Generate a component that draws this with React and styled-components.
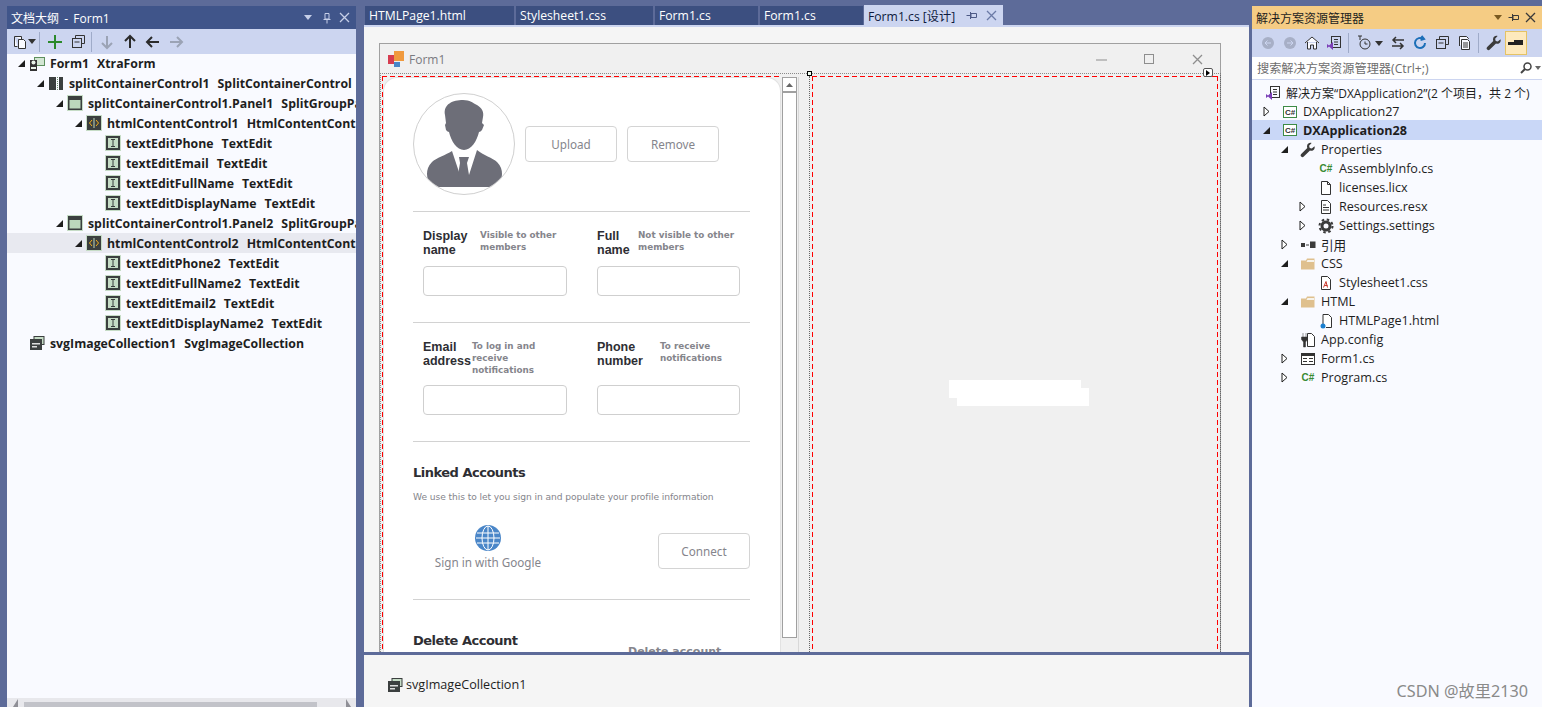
import React from "react";
import styled, { createGlobalStyle } from "styled-components";

const Global = createGlobalStyle`
  html, body { margin: 0; padding: 0; height: 100%; overflow: hidden; background: #5d6b99; }
  #root { height: 707px; width: 1542px; }
  * { box-sizing: border-box; }
`;
const UI = `"Open Sans", "Noto Sans CJK SC", sans-serif`;
const dashH = `repeating-linear-gradient(90deg, #f00 0 5px, transparent 5px 8px)`;
const dashV = `repeating-linear-gradient(180deg, #f00 0 5px, transparent 5px 8px)`;

const Page = styled.div`
  display: grid; grid-template-columns: 349px 8px 885px 3px 290px;
  height: 707px; width: 1542px; padding: 6px 0 0 7px; background: #5d6b99; position: relative;
  font-family: ${UI}; font-size: 13px; color: #1e1e1e; overflow: hidden;
`;
const Side = styled.section`display: flex; flex-direction: column; min-width: 0; height: 701px; background: #f9faff; overflow: hidden;`;
const Title = styled.header`
  height: 23px; flex: none; display: flex; align-items: center; padding: 0 6px 0 4px;
  background: ${p => (p.$active ? "#f5cc84" : "#40558a")}; color: ${p => (p.$active ? "#1e1e1e" : "#fff")}; font-size: 12px;
`;
const TitleText = styled.span`flex: 1; white-space: pre; word-spacing: -.5px;`;
const Spacer = styled.span`width: ${p => p.$w}px; flex: none;`;
const Toolbar = styled.div`height: ${p => p.$h || 25}px; flex: none; background: #ccd5f0; display: flex; align-items: center; padding-left: 5px;`;
const TbSep = styled.i`width: 1px; height: 20px; background: #9fabc9; margin: 0 ${p => p.$r ?? p.$m ?? 5}px 0 ${p => p.$m ?? 5}px;`;
const TinyBtn = styled.span`display: flex; align-items: center; justify-content: center; width: ${p => p.$w || 23}px; height: 22px; flex: none;`;
const ActiveTool = styled.span`width: 22px; height: 24px; background: #fde9bd; border: 1px solid #e5c365; display: flex; align-items: center; justify-content: center;`;
const Tree = styled.div`flex: 1; min-height: 0; padding-top: ${p => p.$top || 0}px; margin-top: ${p => p.$shift || 0}px; overflow: hidden;`;
const Row = styled.div`
  height: ${p => (p.$sel === 2 ? 20 : p.$h)}px; margin-top: ${p => (p.$sel === 2 ? -1 : 0)}px;
  display: flex; align-items: center; white-space: nowrap; overflow: hidden;
  padding-left: ${p => p.$i}px; font-weight: ${p => (p.$bold ? 700 : 400)}; font-size: ${p => p.$fs || 12.6}px;
  background: ${p => (p.$sel === 2 ? "#c9d7f7" : p.$sel === 1 ? "#e8e9f0" : "transparent")};
`;
const Arrow = styled.span`width: ${p => p.$w || 12}px; flex: none; margin-left: -2px; display: flex; align-items: center;`;
const IconSlot = styled.span`width: 16px; height: 16px; flex: none; margin-right: ${p => p.$mr || 5}px; display: flex; align-items: center; justify-content: center;`;
const Kind = styled.span`margin-left: 8px;`;
const OutlineText = styled.span`font-size: 12.3px;`;
const HScroll = styled.div`height: 9px; flex: none; background: #e8e8ec; display: flex; align-items: flex-end; padding: 0 5px 0 6px; justify-content: space-between; margin-top: auto;`;
const HThumb = styled.div`width: 293px; height: 5px; background: #c2c3c9; margin: 0 auto 0 6px;`;

const Center = styled.main`grid-column: 3; display: flex; flex-direction: column; height: 701px; min-width: 0;`;
const Tabs = styled.nav`height: 19px; flex: none; display: flex; padding-left: 1px; align-items: flex-start;`;
const Tab = styled.div`
  width: ${p => p.$w}px; height: ${p => (p.$on ? 21 : 19)}px; display: flex; align-items: center; padding-left: 4px; flex: none;
  margin-right: ${p => p.$gap ?? 2}px; margin-top: ${p => (p.$on ? -1 : 0)}px;
  background: ${p => (p.$on ? "#ccd5f0" : "#3c4f80")}; color: ${p => (p.$on ? "#0e1a3d" : "#fff")}; font-size: 12.2px; white-space: pre;
`;
const TabAccent = styled.div`height: 2px; flex: none; background: #ccd5f0;`;
const Doc = styled.div`flex: 1; min-height: 0; background: #f5f5f5; overflow: hidden; padding: 16px 0 0 15px;`;
const FormWin = styled.div`width: 842px; height: 640px; border: 1px solid #a0a0a0; background: #f0f0f0; display: flex; flex-direction: column;`;
const WinBar = styled.div`height: 29px; flex: none; display: flex; align-items: center; padding: 1px 0 0 8px; margin-right: -1px; color: #7a7a80; font-size: 12px;`;
const WinTitle = styled.span`flex: 1; margin-left: 5px;`;
const WinBtn = styled.span`width: 48px; height: 28px; flex: none; display: flex; align-items: center; justify-content: center;`;
const Split = styled.div`
  flex: 1; position: relative; display: grid; grid-template-columns: 429px 1fr; min-height: 0; margin-right: -1px;
  border-top: 1px dotted #8a8a8a; border-left: 1px dotted #8a8a8a; border-right: 1px dotted #666;
`;
const PanelL = styled.div`
  margin: 2px 0 0 1px; padding: 1px 0 0 1px; display: flex; height: 640px; position: relative;
  border-right: 1px dotted #666;
  background: ${dashH} 0 0 / 398px 1px no-repeat, ${dashV} 0 0 / 1px 100% no-repeat;
`;
const PanelR = styled.div`
  margin: 2px 2px 0 2px; position: relative; height: 640px;
  background: ${dashH} 0 0 / 100% 1px no-repeat, ${dashV} 0 0 / 1px 100% no-repeat, ${dashV} 100% 0 / 1px 100% no-repeat;
`;
const Card = styled.div`width: 398px; height: 800px; background: #fff; border-radius: 14px 14px 0 0; border: 1px solid #e2e2e2; border-bottom: none; padding: 15px 30px 0 29px; flex: none;`;
const VScroll = styled.div`width: 15px; flex: none; height: 561px; margin: 0 0 0 1px; border: 1px solid #a0a0a0; background: #fff;`;
const ScrollUp = styled.div`height: 15px; border-bottom: 2px solid #a0a0a0; display: flex; align-items: center; justify-content: center; background: #fff;`;
const Gutter = styled.div`flex: 1; margin-left: 1px; border-left: 1px solid #d8d8d8;`;
const Top = styled.div`display: flex; align-items: center; gap: 10px; height: 102px;`;
const Avatar = styled.div`width: 102px; height: 102px; border-radius: 50%; border: 1px solid #d0d0d0; overflow: hidden; flex: none;`;
const Btn = styled.div`width: 92px; height: 36px; border: 1px solid #d4d4d4; border-radius: 4px; display: flex; align-items: center; justify-content: center; color: #85858c; font-family: "Noto Sans", sans-serif; font-size: 11.7px; margin-top: ${p => p.$mt || 0}px;`;
const Rule = styled.hr`border: 0; height: 1px; background: #d2d2d2; margin: ${p => p.$t}px 0 0; width: 337px;`;
const Fields = styled.div`display: grid; grid-template-columns: 144px 143px; column-gap: 30px; margin-left: 10px; margin-top: ${p => p.$t}px;`;
const Field = styled.div`display: flex; flex-direction: column;`;
const FieldHead = styled.div`display: flex; height: ${p => p.$h}px; gap: ${p => p.$g}px;`;
const FieldName = styled.div`font-family: "Liberation Sans", sans-serif; font-weight: 700; font-size: 12.5px; line-height: 14px; width: ${p => p.$w}px; flex: none; color: #2e2e33;`;
const FieldHint = styled.div`font-family: "DejaVu Sans", sans-serif; font-weight: 700; font-size: 8.8px; line-height: 12px; color: #85858c;`;
const Input = styled.div`height: 30px; border: 1px solid #cfcfcf; border-radius: 4px; background: #fff;`;
const H2 = styled.h2`margin: ${p => p.$t}px 0 0; font-family: "DejaVu Sans", sans-serif; font-size: 13px; line-height: 18px; font-weight: 700; color: #2e2e33; letter-spacing: -.5px;`;
const Sub = styled.p`margin: 9px 0 0; font-family: "DejaVu Sans", sans-serif; font-size: 9.15px; line-height: 13px; color: #85858c; letter-spacing: -.08px;`;
const Linked = styled.div`display: flex; align-items: flex-start; justify-content: space-between; margin-top: 21px; height: 48px; width: 337px;`;
const Google = styled.div`width: 150px; display: flex; flex-direction: column; align-items: center; color: #85858c; font-family: "Noto Sans", sans-serif; font-size: 11.7px; gap: 3px; line-height: 16px;`;
const DelRow = styled.div`display: flex; margin-top: 32px; width: 337px; height: 40px; position: relative;`;
const DelBtn = styled.div`position: absolute; left: 215px; top: 13px; font-family: "DejaVu Sans", sans-serif; font-weight: 700; font-size: 11px; color: #85858c;`;
const Blank = styled.div`position: absolute; background: #fff; left: ${p => p.$x}px; top: ${p => p.$y}px; width: 132px; height: 18px;`;
const Handle = styled.span`position: absolute; width: 5px; height: 5px; border: 1px solid #000; background: #f2fff2; left: 426px; top: -3px;`;
const Smart = styled.span`position: absolute; right: 7px; top: -6px; width: 10px; height: 9px; border: 1px solid #555; border-radius: 2px; background: #fff; display: flex; align-items: center; justify-content: center;`;
const Divider = styled.div`height: 3px; flex: none; background: #5d6b99;`;
const TrayBox = styled.div`height: 52px; flex: none; background: #f5f5f5; display: flex; align-items: center; padding: 7px 0 0 23px; gap: 3px; font-size: 12.6px;`;

const Right = styled(Side)`grid-column: 5; width: 290px;`;
const SearchBar = styled.div`height: 23px; flex: none; background: #fff; border-bottom: 1px solid #ccd5f0; color: #6d6d6d; display: flex; align-items: center; padding: 0 1px 0 5px; font-size: 12.2px;`;
const SearchText = styled.span`flex: 1;`;
const Watermark = styled.div`position: absolute; right: 14px; top: 678px; color: #8a8a8a; font-family: "Noto Sans", "Noto Sans CJK SC", sans-serif; font-size: 16.2px;`;
const CSFileMark = styled.span`color: #388a34; font-weight: 800; font-size: 10px; font-family: "Liberation Sans", sans-serif;`;

const Tri = ({ open }) => open
  ? <svg width="9" height="9"><path d="M8 1v7H1z" fill="#1e1e1e" /></svg>
  : <svg width="9" height="11"><path d="M2 1l5 4.5L2 10z" fill="#fff" stroke="#1e1e1e" /></svg>;

const Svg = ({ children, s = 16, v = 16 }) => <svg width={s} height={s} viewBox={`0 0 ${v} ${v}`}>{children}</svg>;
const GBox = ({ children }) => <Svg><rect width="16" height="16" fill="#c6dcc6" /><rect x="1" y="1" width="14" height="14" fill="#3b3f3f" />{children}</Svg>;

const IconEdit = () => <GBox><rect x="3" y="3" width="10" height="10" fill="#c6dcc6" /><path d="M6 4.500h4M6 11.500h4M8 4.500v7" stroke="#3b3f3f" fill="none" /></GBox>;
const IconPanel = () => <GBox><rect x="2.500" y="5" width="11" height="8.500" fill="#bcd8bc" /></GBox>;
const IconHtml = () => <GBox><path d="M6 5L3.500 8 6 11" stroke="#f0b020" fill="none" /><path d="M10 5l2.500 3L10 11" stroke="#f0b020" fill="none" /><path d="M8 3v10" stroke="#bcd8bc" /></GBox>;
const IconSplit = () => <Svg><rect x="1" y="2" width="7" height="13" fill="#3b3f3f" /><rect x="11" y="2" width="4" height="13" fill="#3b3f3f" /><path d="M9.500 2v13" stroke="#6c8f6c" strokeDasharray="1 1" /></Svg>;
const IconForm = () => <Svg><rect x="5.500" y="2.500" width="10" height="8" fill="#d3e6d3" stroke="#5d8f5d" /><rect x="1" y="5" width="7" height="11" fill="#333" /><circle cx="4.500" cy="7.500" r="2" fill="#e9f3e9" /><path d="M2 12h5v2H2z" fill="#e9f3e9" /></Svg>;
const IconColl = () => <Svg><rect x="5" y="1.500" width="10" height="8" fill="#c6dcc6" stroke="#3b3f3f" /><rect x="1" y="4" width="12" height="11" fill="#3b3f3f" /><rect x="3" y="8" width="8" height="1.500" fill="#ddd" /><rect x="3" y="11" width="5" height="1.500" fill="#ddd" /></Svg>;
const CollOutline = () => <Svg><path d="M5.500 4V1.500h9v8H12" stroke="#333" fill="none" /><rect x="2.500" y="4.500" width="9" height="9" fill="none" stroke="#333" /><path d="M4.500 8h5" stroke="#333" /></Svg>;

const Pin = ({ c = "#c6cfe8" }) => <Svg s={12} v={12}><path d="M4 1.500h4v5.500H4zM2.500 7.500h7M6 8v3.500" stroke={c} fill="none" /></Svg>;
const PinH = ({ c = "#4d5a86" }) => <Svg s={12} v={12}><path d="M5 3.500h5.500v4H5zM4.500 2v7M4 5.500H.5" stroke={c} fill="none" /></Svg>;
const Cross = ({ c = "#c6cfe8", s = 11 }) => <svg width={s} height={s} viewBox="0 0 11 11"><path d="M1 1l9 9M10 1l-9 9" stroke={c} strokeWidth="1.300" /></svg>;
const Drop = ({ c = "#c6cfe8" }) => <svg width="8" height="5"><path d="M0 0h8L4 5z" fill={c} /></svg>;
const CS = () => <Svg><rect x="1.500" y="2.500" width="13" height="11" fill="#fff" stroke="#3e8b46" /><text x="8" y="11" fontSize="8" fontWeight="700" textAnchor="middle" fill="#2f2f2f" fontFamily="Liberation Sans">C#</text></Svg>;
const CSFile = () => <CSFileMark>C#</CSFileMark>;
const VS = () => <Svg><rect x="5.500" y="1.500" width="9" height="11" fill="none" stroke="#333" /><path d="M8 4.500h4M8 7h4M8 9.500h4" stroke="#333" /><path d="M1 9l2 1.500L7 7v8l-4-3.500L1 13z" fill="#7b3fb8" /></Svg>;
const Wrench = ({ c = "#3b3b3b" }) => <Svg><path d="M14.500 4.200l-2.700 2.300-2.100-.6-.6-2.100L11.600 1C9.300.3 7 1.900 7 4.400c0 .5.100 1 .3 1.500L1.200 12c-.8.800-.8 1.800 0 2.600.8.800 1.800.8 2.600 0l6.200-6.100c2.900 1 5.400-1.400 4.500-4.300z" fill={c} /></Svg>;
const FileI = () => <Svg><path d="M3.500 1.500h6l3 3v10h-9z" fill="#fff" stroke="#333" /><path d="M9.500 1.500v3h3" fill="none" stroke="#333" /></Svg>;
const Resx = () => <Svg><path d="M3.500 1.500h6l3 3v10h-9z" fill="#fff" stroke="#333" /><path d="M5 6h3M5 8.500h6M5 11h6" stroke="#333" /></Svg>;
const Gear = () => <Svg><circle cx="8" cy="8" r="4" fill="none" stroke="#3b3b3b" strokeWidth="3" /><circle cx="8" cy="8" r="6.500" fill="none" stroke="#3b3b3b" strokeWidth="2" strokeDasharray="2.500 2.600" /></Svg>;
const Refs = () => <Svg><rect x="1" y="6" width="4" height="4" fill="#3b3b3b" /><rect x="10" y="4.500" width="5.500" height="6.500" fill="#3b3b3b" /><path d="M6 8h3" stroke="#3b3b3b" /></Svg>;
const Folder = () => <Svg><path d="M1 4.500h5l1-2h7.500v11H1z" fill="#dfc08e" /><path d="M3 6h11V4H7.500L6.500 6z" fill="#f7f3ea" /></Svg>;
const CssI = () => <Svg><path d="M3.500 1.500h6l3 3v10h-9z" fill="#fff" stroke="#333" /><path d="M5.500 12.500l2.500-6 1.500 6M6.500 10.500h3" stroke="#c8372b" fill="none" /></Svg>;
const HtmlI = () => <Svg><path d="M5 12V1.500h5.500l3 3v10H8" fill="#fff" stroke="#333" /><circle cx="5" cy="13" r="2.500" fill="#1a7fd0" /></Svg>;
const Config = () => <Svg><path d="M7.500 1.500h4l3 3v10h-7z" fill="#fff" stroke="#333" /><path d="M3 1v4M6 1v4M1.500 5h6v2.500L5.500 10v5h-2v-5L1.500 7.500z" fill="#333" stroke="#333" strokeWidth=".5" /></Svg>;
const FormI = () => <Svg><rect x="1.500" y="2.500" width="13" height="11" fill="#fff" stroke="#333" /><rect x="1.500" y="2.500" width="13" height="2.500" fill="#333" /><path d="M3 7.500h4M3 10.500h4M9 7.500h4M9 10.500h4" stroke="#333" /></Svg>;

const G = ({ children, s = 16 }) => <svg width={s} height={s} viewBox="0 0 16 16">{children}</svg>;
const ArrowBtn = ({ d, c }) => <TinyBtn><G><path d={d} stroke={c} strokeWidth="2" fill="none" /></G></TinyBtn>;
const Globe = () => <svg width="26" height="26" viewBox="0 0 26 26"><circle cx="13" cy="13" r="13" fill="#4a86c8" /><g stroke="#fff" strokeWidth="1" fill="none"><ellipse cx="13" cy="13" rx="6" ry="12" /><path d="M13 1v24M2 8h22M1 13h24M2 18h22" /></g></svg>;
const Person = () => (
  <svg width="100" height="100" viewBox="1 1 100 100">
    <path d="M32 22C30 11 40 7 50 7c7 0 10 3 14 5 5 3 7 7 6 12l-1 6 2 2-2 5c-1 1-2 2-3 2-2 9-8 18-15 18S38 48 36 39c-1 0-2-1-3-2l-1-5 1-2z" fill="#6d6e78" />
    <path d="M39 58c-6 4-16 7-20 11-4 4-5 8-5 12 0 5 2 10 4 13h67c2-3 4-8 4-13 0-4-1-8-5-12-4-4-14-7-20-12l-8 25h-9z" fill="#6d6e78" />
    <path d="M46 64h10l-2 6 2 12-1 3h-9l-1-3 2-12z" fill="#6d6e78" />
  </svg>
);
const Logo = () => <svg width="16" height="16" viewBox="0 0 16 16"><rect y="4" width="6" height="9" fill="#d63c50" /><rect x="6" width="10" height="10" fill="#f09a3e" /><rect x="6" y="11" width="6" height="5" fill="#4a86c8" /></svg>;

const outline = [
  { i: 12, label: "Form1", kind: "XtraForm", icon: <IconForm /> },
  { i: 31, label: "splitContainerControl1", kind: "SplitContainerControl", icon: <IconSplit /> },
  { i: 50, label: "splitContainerControl1.Panel1", kind: "SplitGroupPanel", icon: <IconPanel /> },
  { i: 69, label: "htmlContentControl1", kind: "HtmlContentControl", icon: <IconHtml /> },
  { i: 88, label: "textEditPhone", kind: "TextEdit", icon: <IconEdit />, leaf: 1 },
  { i: 88, label: "textEditEmail", kind: "TextEdit", icon: <IconEdit />, leaf: 1 },
  { i: 88, label: "textEditFullName", kind: "TextEdit", icon: <IconEdit />, leaf: 1 },
  { i: 88, label: "textEditDisplayName", kind: "TextEdit", icon: <IconEdit />, leaf: 1 },
  { i: 50, label: "splitContainerControl1.Panel2", kind: "SplitGroupPanel", icon: <IconPanel /> },
  { i: 69, label: "htmlContentControl2", kind: "HtmlContentControl", icon: <IconHtml />, sel: 1 },
  { i: 88, label: "textEditPhone2", kind: "TextEdit", icon: <IconEdit />, leaf: 1 },
  { i: 88, label: "textEditFullName2", kind: "TextEdit", icon: <IconEdit />, leaf: 1 },
  { i: 88, label: "textEditEmail2", kind: "TextEdit", icon: <IconEdit />, leaf: 1 },
  { i: 88, label: "textEditDisplayName2", kind: "TextEdit", icon: <IconEdit />, leaf: 1 },
  { i: 12, label: "svgImageCollection1", kind: "SvgImageCollection", icon: <IconColl />, leaf: 1 },
];

const solution = [
  { i: 13, label: "解决方案“DXApplication2”(2 个项目，共 2 个)", icon: <VS />, root: 1, fs: 12 },
  { i: 12, label: "DXApplication27", icon: <CS />, a: "c" },
  { i: 12, label: "DXApplication28", icon: <CS />, a: "o", bold: 1, sel: 2 },
  { i: 30, label: "Properties", icon: <Wrench />, a: "o" },
  { i: 48, label: "AssemblyInfo.cs", icon: <CSFile /> },
  { i: 48, label: "licenses.licx", icon: <FileI /> },
  { i: 48, label: "Resources.resx", icon: <Resx />, a: "c" },
  { i: 48, label: "Settings.settings", icon: <Gear />, a: "c" },
  { i: 30, label: "引用", icon: <Refs />, a: "c" },
  { i: 30, label: "CSS", icon: <Folder />, a: "o" },
  { i: 48, label: "Stylesheet1.css", icon: <CssI /> },
  { i: 30, label: "HTML", icon: <Folder />, a: "o" },
  { i: 48, label: "HTMLPage1.html", icon: <HtmlI /> },
  { i: 30, label: "App.config", icon: <Config /> },
  { i: 30, label: "Form1.cs", icon: <FormI />, a: "c" },
  { i: 30, label: "Program.cs", icon: <CSFile />, a: "c" },
];

export default function App() {
  return (
    <Page>
      <Global />
      <Side>
        <Title><TitleText>文档大纲  -  Form1</TitleText><Drop /><Spacer $w={9} /><Pin /><Spacer $w={6} /><Cross /></Title>
        <Toolbar>
          <TinyBtn $w={24}><G><path d="M2.500 2.500h7v3M2.500 2.500v10h3M6.500 5.500h5l2 2v7h-7z" stroke="#333" fill="#f9faff" /></G><Drop c="#333" /></TinyBtn>
          <TbSep $m={3} />
          <TinyBtn><G><path d="M8 1v14M1 8h14" stroke="#2b8a2b" strokeWidth="2" /></G></TinyBtn>
          <TinyBtn><CollOutline /></TinyBtn>
          <TbSep $m={2} $r={3} />
          <ArrowBtn d="M8 2v12M3 9l5 5 5-5" c="#9ba3b5" />
          <ArrowBtn d="M8 14V2M3 7l5-5 5 5" c="#2b2b2b" />
          <ArrowBtn d="M14 8H2M7 3L2 8l5 5" c="#2b2b2b" />
          <ArrowBtn d="M2 8h12M9 3l5 5-5 5" c="#9ba3b5" />
        </Toolbar>
        <Tree $shift={-1}>
          {outline.map((r, k) => (
            <Row key={k} $h={20} $i={r.i} $sel={r.sel} $bold>
              <Arrow>{r.leaf ? null : <Tri open />}</Arrow>
              <IconSlot>{r.icon}</IconSlot>
              <OutlineText>{r.label}<Kind>{r.kind}</Kind></OutlineText>
            </Row>
          ))}
        </Tree>
        <HScroll>
          <svg width="5" height="8"><path d="M5 0v8H0z" fill="#8f8f96" /></svg>
          <HThumb />
          <svg width="5" height="8"><path d="M0 0v8h5z" fill="#8f8f96" /></svg>
        </HScroll>
      </Side>

      <Center>
        <Tabs>
          <Tab $w={149}>HTMLPage1.html</Tab>
          <Tab $w={137}>Stylesheet1.css</Tab>
          <Tab $w={103}>Form1.cs</Tab>
          <Tab $w={103} $gap={1}>Form1.cs</Tab>
          <Tab $w={139} $on>Form1.cs [设计]<Spacer $w={11} /><PinH /><Spacer $w={8} /><Cross c="#6b7aa6" /></Tab>
        </Tabs>
        <TabAccent />
        <Doc>
          <FormWin>
            <WinBar>
              <Logo />
              <WinTitle>Form1</WinTitle>
              <WinBtn><svg width="11" height="11"><path d="M0 6h11" stroke="#8e8e8e" /></svg></WinBtn>
              <WinBtn><svg width="11" height="11"><rect x=".5" y=".5" width="9" height="9" stroke="#8e8e8e" fill="none" /></svg></WinBtn>
              <WinBtn><Cross c="#8e8e8e" /></WinBtn>
            </WinBar>
            <Split>
              <PanelL>
                <Card>
                  <Top>
                    <Avatar><Person /></Avatar>
                    <Btn>Upload</Btn>
                    <Btn>Remove</Btn>
                  </Top>
                  <Rule $t={16} />
                  <Fields $t={17}>
                    <Field><FieldHead $h={37} $g={14}><FieldName $w={43}>Display name</FieldName><FieldHint>Visible to other members</FieldHint></FieldHead><Input /></Field>
                    <Field><FieldHead $h={37} $g={8}><FieldName $w={33}>Full name</FieldName><FieldHint>Not visible to other members</FieldHint></FieldHead><Input /></Field>
                  </Fields>
                  <Rule $t={26} />
                  <Fields $t={17}>
                    <Field><FieldHead $h={45} $g={2}><FieldName $w={47}>Email address</FieldName><FieldHint>To log in and receive notifications</FieldHint></FieldHead><Input /></Field>
                    <Field><FieldHead $h={45} $g={9}><FieldName $w={54}>Phone number</FieldName><FieldHint>To receive notifications</FieldHint></FieldHead><Input /></Field>
                  </Fields>
                  <Rule $t={26} />
                  <H2 $t={22}>Linked Accounts</H2>
                  <Sub>We use this to let you sign in and populate your profile information</Sub>
                  <Linked>
                    <Google><Globe />Sign in with Google</Google>
                    <Btn $mt={8}>Connect</Btn>
                  </Linked>
                  <Rule $t={26} />
                  <DelRow><H2 $t={0}>Delete Account</H2><DelBtn>Delete account</DelBtn></DelRow>
                </Card>
                <VScroll><ScrollUp><svg width="7" height="4"><path d="M0 4h7L3.500 0z" fill="#666" /></svg></ScrollUp></VScroll>
                <Gutter />
              </PanelL>
              <PanelR>
                <Blank $x={137} $y={304} />
                <Blank $x={145} $y={312} />
              </PanelR>
              <Handle />
              <Smart><svg width="4" height="6"><path d="M0 0l4 3-4 3z" fill="#000" /></svg></Smart>
            </Split>
          </FormWin>
        </Doc>
        <Divider />
        <TrayBox><IconColl />svgImageCollection1</TrayBox>
      </Center>

      <Right>
        <Title $active><TitleText>解决方案资源管理器</TitleText><Drop c="#7a5a20" /><Spacer $w={6} /><PinH c="#3a3a3a" /><Spacer $w={5} /><Cross c="#3a3a3a" /></Title>
        <Toolbar $h={28}>
          <TinyBtn $w={22}><G><circle cx="8" cy="8" r="6" fill="#a7afc6" /><path d="M11 8H5M7.500 5.500L5 8l2.500 2.500" stroke="#ccd5f0" fill="none" /></G></TinyBtn>
          <TinyBtn $w={22}><G><circle cx="8" cy="8" r="6" fill="#a7afc6" /><path d="M5 8h6M8.500 5.500L11 8l-2.500 2.500" stroke="#ccd5f0" fill="none" /></G></TinyBtn>
          <TinyBtn $w={22}><G><path d="M1 8l7-6 7 6M3.500 7v7h3v-4h3v4h3V7" stroke="#333" fill="#f9faff" /></G></TinyBtn>
          <TinyBtn $w={22}><VS /></TinyBtn>
          <TbSep $m={3} />
          <TinyBtn $w={35}><G><circle cx="9" cy="9" r="5" fill="none" stroke="#333" /><path d="M9 6.500V9h2.500M2 1h4M4 1v4" stroke="#333" fill="none" /></G><Spacer $w={3} /><Drop c="#333" /></TinyBtn>
          <TinyBtn $w={22}><G><path d="M14 5H3M6 2L3 5l3 3M2 11h11M10 8l3 3-3 3" stroke="#333" strokeWidth="1.500" fill="none" /></G></TinyBtn>
          <TinyBtn $w={22}><G><path d="M13 8a5 5 0 1 1-2-4M9.500 1l2.500 3-3.500 1" stroke="#1c6fb8" strokeWidth="2" fill="none" /></G></TinyBtn>
          <TinyBtn $w={22}><CollOutline /></TinyBtn>
          <TinyBtn $w={22}><G><path d="M3.500 11V1.500h7l2 2V4M5.500 4.500h6l2 2v8h-8z" stroke="#333" fill="#f9faff" /><path d="M7 8h5M7 10h5M7 12h5" stroke="#333" /></G></TinyBtn>
          <TbSep $m={3} $r={4} />
          <TinyBtn $w={22}><Wrench /></TinyBtn>
          <ActiveTool><svg width="16" height="8"><rect y="3" width="15" height="3" fill="#222" /><rect x="6" y="1" width="9" height="3" fill="#222" /></svg></ActiveTool>
        </Toolbar>
        <SearchBar>
          <SearchText>搜索解决方案资源管理器(Ctrl+;)</SearchText>
          <svg width="14" height="14"><circle cx="8.500" cy="5.500" r="3.500" stroke="#444" strokeWidth="1.500" fill="none" /><path d="M6 8L2 12" stroke="#444" strokeWidth="2" /></svg>
          <Spacer $w={2} />
          <svg width="6" height="4"><path d="M0 0h6L3 4z" fill="#666" /></svg>
        </SearchBar>
        <Tree $top={3}>
          {solution.map((r, k) => (
            <Row key={k} $h={19} $i={r.i} $bold={r.bold} $sel={r.sel} $fs={r.fs}>
              {r.root ? null : <Arrow $w={20}>{r.a === "o" ? <Tri open /> : r.a === "c" ? <Tri /> : null}</Arrow>}
              <IconSlot>{r.icon}</IconSlot>
              {r.label}
            </Row>
          ))}
        </Tree>
      </Right>
      <Watermark>CSDN @故里2130</Watermark>
    </Page>
  );
}
